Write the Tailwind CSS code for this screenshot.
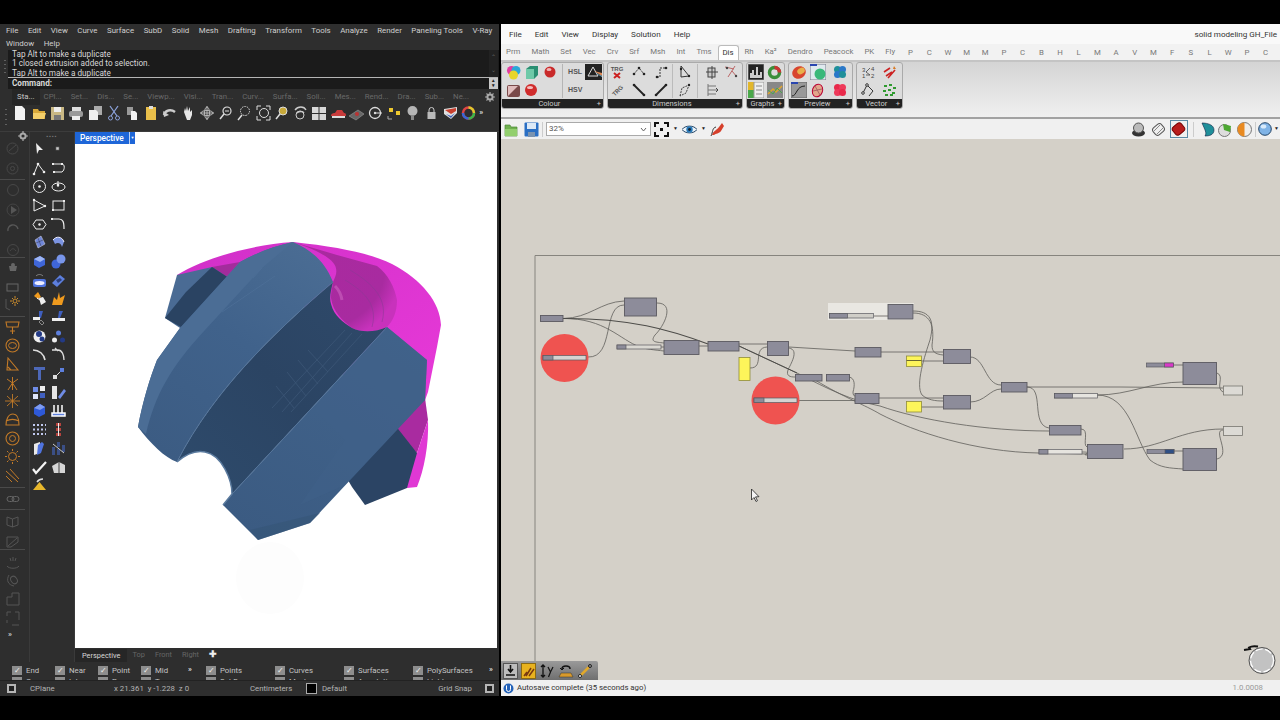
<!DOCTYPE html>
<html lang="en">
<head>
<meta charset="UTF-8">
<title>Rhino and Grasshopper</title>
<script src="https://cdn.jsdelivr.net/npm/@tailwindcss/browser@4"></script>
</head>
<body class="bg-black h-[720px] w-[1280px] overflow-hidden font-['Roboto',sans-serif]">
<div class="flex h-[672px] mt-[24px] gap-[2px]">

  <!-- Rhino side -->
  <div class="w-[499px] h-full flex flex-col bg-[#2e2e2e] text-[#cfcfcf]">
    <div class="h-[26px] pl-[6px] text-[7.9px] leading-[13px] shrink-0 whitespace-nowrap">
      <div class="flex gap-[9.5px]"><span>File</span><span>Edit</span><span>View</span><span>Curve</span><span>Surface</span><span>SubD</span><span>Solid</span><span>Mesh</span><span>Drafting</span><span>Transform</span><span>Tools</span><span>Analyze</span><span>Render</span><span>Paneling Tools</span><span>V-Ray</span></div>
      <div class="flex gap-[9.5px]"><span>Window</span><span>Help</span></div>
    </div>
    <div class="h-[39px] shrink-0 flex">
      <svg class="w-[8px] h-[28px]" viewBox="0 0 8 28"><path d="M5 10v1M5 14v1M5 18v1M5 22v1" stroke="#777" stroke-width="1.400"/></svg>
      <div class="flex-1 bg-[#1b1b1b] flex flex-col text-[8.2px] leading-[9.3px] text-[#d8d8d8] pr-[1px]">
        <div class="h-[28px] pl-[4px] border-b border-[#b5b5b5] flex justify-between overflow-hidden">
          <div><div>Tap Alt to make a duplicate</div><div>1 closed extrusion added to selection.</div><div>Tap Alt to make a duplicate</div></div>
          <div class="w-[9px] bg-[#222] text-[#666] text-[6px] text-center leading-[13px]">⌃<br>⌄</div>
        </div>
        <div class="flex-1 pl-[4px] font-bold leading-[11px] flex justify-between">Command:<span class="w-[9px] bg-[#c8c8c8] text-[#222] text-[5px] leading-[5px] text-center">▴<br>▾</span></div>
      </div>
    </div>
    <div class="h-[16px] shrink-0 pl-[12px] pr-[2px] flex items-center gap-[9px] text-[7.8px] text-[#696969] whitespace-nowrap">
      <span class="bg-[#262626] text-[#c8c8c8] px-[5px] -mr-[5px] leading-[16px]">Sta...</span><span>CPl...</span><span>Set...</span><span>Dis...</span><span>Se...</span><span>Viewp...</span><span>Visi...</span><span>Tran...</span><span>Curv...</span><span>Surfa...</span><span>Soli...</span><span>Mes...</span><span>Rend...</span><span>Dra...</span><span>Sub...</span><span>Ne...</span>
      <svg class="w-[10px] h-[10px] ml-auto mr-[2px]" viewBox="0 0 10 10"><circle cx="5" cy="5" r="2.600" fill="none" stroke="#aaa" stroke-width="2"/><path d="M5 0v2M5 8v2M0 5h2M8 5h2M1.500 1.500l1.300 1.300M7.200 7.200l1.300 1.300M1.500 8.500l1.300-1.300M7.200 2.800l1.300-1.300" stroke="#aaa" stroke-width="1.200"/></svg>
    </div>
    <div class="h-[27px] shrink-0 flex items-start border-b border-[#3c3c3c]">
      <svg class="w-[11px] h-[24px]" viewBox="0 0 11 24"><path d="M6 4v1M6 9v1M6 14v1M6 19v1" stroke="#777" stroke-width="1.400"/></svg>
      <div class="w-[18.7px] flex justify-center"><svg class="w-[14px] h-[16px]" viewBox="0 0 14 16"><path d="M2 1h7l3 3v11H2z" fill="#f2f2f2"/></svg></div>
      <div class="w-[18.7px] flex justify-center"><svg class="w-[15px] h-[16px]" viewBox="0 0 15 16"><path d="M1 4h5l1 2h6v8H1z" fill="#d9a93a"/><path d="M1 8h13l-2 6H1z" fill="#f4cf6a"/></svg></div>
      <div class="w-[18.7px] flex justify-center"><svg class="w-[15px] h-[16px]" viewBox="0 0 15 16"><rect x="1" y="2" width="13" height="13" fill="#c9b884"/><rect x="4" y="2" width="7" height="5" fill="#eee"/><rect x="4" y="10" width="7" height="5" fill="#777"/></svg></div>
      <div class="w-[18.7px] flex justify-center"><svg class="w-[16px] h-[16px]" viewBox="0 0 16 16"><rect x="4" y="2" width="9" height="5" fill="#ddd"/><rect x="1" y="6" width="14" height="6" rx="2" fill="#999"/><rect x="4" y="11" width="8" height="4" fill="#eee"/></svg></div>
      <div class="w-[18.7px] flex justify-center"><svg class="w-[15px] h-[16px]" viewBox="0 0 15 16"><rect x="6" y="1" width="8" height="9" fill="#aaa"/><path d="M1 5h7l2 2v8H1z" fill="#eee"/></svg></div>
      <div class="w-[18.7px] flex justify-center"><svg class="w-[14px] h-[16px]" viewBox="0 0 14 16"><path d="M3 1l7 10M11 1L4 11" stroke="#8aa0d8" stroke-width="1.300"/><circle cx="3.500" cy="13" r="2" fill="none" stroke="#8aa0d8"/><circle cx="10.500" cy="13" r="2" fill="none" stroke="#8aa0d8"/></svg></div>
      <div class="w-[18.7px] flex justify-center"><svg class="w-[14px] h-[16px]" viewBox="0 0 14 16"><rect x="2" y="2" width="6" height="8" fill="#999"/><path d="M6 6h4l2 2v7H6z" fill="#f2f2f2"/></svg></div>
      <div class="w-[18.7px] flex justify-center"><svg class="w-[14px] h-[16px]" viewBox="0 0 14 16"><rect x="2" y="2" width="10" height="13" fill="#e9bf4a"/><rect x="5" y="1" width="4" height="3" fill="#ddd"/></svg></div>
      <div class="w-[18.7px] flex justify-center"><svg class="w-[16px] h-[16px]" viewBox="0 0 16 16"><path d="M2 10C3 5 9 4 13 7" fill="none" stroke="#ccc" stroke-width="2.500"/><path d="M1 6l1 6 5-2z" fill="#ccc"/></svg></div>
      <div class="w-[18.7px] flex justify-center"><svg class="w-[15px] h-[16px]" viewBox="0 0 15 16"><path d="M3 7l1-4 1 3 1-5 1 5 2-4v5l2-2v5l-2 5H6z" fill="#e6e6e6"/></svg></div>
      <div class="w-[18.7px] flex justify-center"><svg class="w-[16px] h-[16px]" viewBox="0 0 16 16"><path d="M8 1v14M1 8h14" stroke="#b9b9b9"/><ellipse cx="8" cy="8" rx="6" ry="2.500" fill="none" stroke="#b9b9b9"/><ellipse cx="8" cy="8" rx="2.500" ry="6" fill="none" stroke="#b9b9b9"/></svg></div>
      <div class="w-[18.7px] flex justify-center"><svg class="w-[14px] h-[16px]" viewBox="0 0 14 16"><circle cx="8" cy="6" r="4" fill="none" stroke="#ddd" stroke-width="1.200"/><path d="M5 9l-4 5" stroke="#ddd" stroke-width="1.500"/><path d="M6 6h4" stroke="#ddd"/></svg></div>
      <div class="w-[18.7px] flex justify-center"><svg class="w-[15px] h-[16px]" viewBox="0 0 15 16"><circle cx="8" cy="6" r="4.500" fill="none" stroke="#ddd" stroke-dasharray="1.500 1"/><path d="M5 10l-4 5" stroke="#ddd" stroke-width="1.500"/></svg></div>
      <div class="w-[18.7px] flex justify-center"><svg class="w-[15px] h-[16px]" viewBox="0 0 15 16"><circle cx="8" cy="8" r="4.500" fill="none" stroke="#ddd"/><path d="M1 5V1h4M14 5V1h-4M1 11v4h4M14 11v4h-4" fill="none" stroke="#ddd"/></svg></div>
      <div class="w-[18.7px] flex justify-center"><svg class="w-[14px] h-[16px]" viewBox="0 0 14 16"><circle cx="8" cy="6" r="4" fill="#c8a93a" stroke="#ddd"/><path d="M5 9l-4 5" stroke="#ddd" stroke-width="1.500"/></svg></div>
      <div class="w-[18.7px] flex justify-center"><svg class="w-[15px] h-[16px]" viewBox="0 0 15 16"><path d="M2 5c3-4 9-4 11 0M4 8c2-2 6-2 7 0" fill="none" stroke="#ccc" stroke-width="1.300"/><circle cx="7" cy="10" r="4" fill="none" stroke="#ccc"/></svg></div>
      <div class="w-[18.7px] flex justify-center"><svg class="w-[16px] h-[16px]" viewBox="0 0 16 16"><rect x="1" y="2" width="6.500" height="6" fill="#d8d8d8"/><rect x="8.500" y="2" width="6.500" height="6" fill="#d8d8d8"/><rect x="1" y="9" width="6.500" height="6" fill="#d8d8d8"/><rect x="8.500" y="9" width="6.500" height="6" fill="#d8d8d8"/></svg></div>
      <div class="w-[18.7px] flex justify-center"><svg class="w-[17px] h-[16px]" viewBox="0 0 17 16"><path d="M1 11c0-3 3-3 4-3l2-3h5l2 3c2 0 2 1 2 3z" fill="#c93b3b"/><rect x="2" y="11" width="13" height="2" fill="#ddd"/></svg></div>
      <div class="w-[18.7px] flex justify-center"><svg class="w-[17px] h-[16px]" viewBox="0 0 17 16"><path d="M1 11l9-6 6 4-8 6z" fill="#666" stroke="#999" stroke-width=".6"/><circle cx="9" cy="9" r="2" fill="#b33"/></svg></div>
      <div class="w-[18.7px] flex justify-center"><svg class="w-[15px] h-[16px]" viewBox="0 0 15 16"><circle cx="7" cy="8" r="5.500" fill="none" stroke="#ddd" stroke-width="1.300"/><circle cx="7" cy="8" r="1.200" fill="#ddd"/><path d="M7 8h7" stroke="#ddd"/></svg></div>
      <div class="w-[18.7px] flex justify-center"><svg class="w-[15px] h-[16px]" viewBox="0 0 15 16"><rect x="2" y="3" width="4" height="4" fill="#eec92f"/><rect x="9" y="6" width="4" height="4" fill="#eec92f"/><path d="M1 14v-3M5 14H1" stroke="#aaa"/></svg></div>
      <div class="w-[18.7px] flex justify-center"><svg class="w-[13px] h-[16px]" viewBox="0 0 13 16"><circle cx="6.500" cy="6" r="5" fill="#b5b5b5"/><rect x="5" y="10" width="3" height="5" fill="#888"/></svg></div>
      <div class="w-[18.7px] flex justify-center"><svg class="w-[13px] h-[16px]" viewBox="0 0 13 16"><path d="M4 7V5a2.500 2.500 0 015 0v2" fill="none" stroke="#ccc"/><rect x="2.500" y="7" width="8" height="7" fill="#bbb"/></svg></div>
      <div class="w-[18.7px] flex justify-center"><svg class="w-[15px] h-[16px]" viewBox="0 0 15 16"><path d="M1 4l13-2v6l-6 6-7-5z" fill="#dfdfdf"/><path d="M2 5l11-2v3L8 9z" fill="#c9402f"/><path d="M3 9l5 2 4-3-4 5z" fill="#3b5db5"/></svg></div>
      <div class="w-[18.7px] flex justify-center"><svg class="w-[15px] h-[16px]" viewBox="0 0 15 16"><circle cx="7.500" cy="8" r="5.500" fill="none" stroke="#d44" stroke-width="2.500"/><path d="M7.500 2.500a5.500 5.500 0 015.500 5.500" fill="none" stroke="#e0c92c" stroke-width="2.500"/><path d="M13 8a5.500 5.500 0 01-5.500 5.500" fill="none" stroke="#3bb54a" stroke-width="2.500"/><path d="M7.500 13.500A5.500 5.500 0 012 8" fill="none" stroke="#3866d6" stroke-width="2.500"/></svg></div>
      <span class="text-[8px] leading-[14px] font-bold text-[#ddd] pl-[1px]">»</span>
    </div>

    <div class="flex h-[530px] shrink-0">
      <!-- side toolbars -->
      <div class="w-[29px] shrink-0 flex flex-col pr-[4px] text-[#555]">
        <div class="h-[9px] shrink-0 flex justify-end -mr-[3px]"><svg class="w-[10px] h-[10px] shrink-0 mt-[-1px]" viewBox="0 0 10 10"><circle cx="5" cy="5" r="2.600" fill="none" stroke="#aaa" stroke-width="2"/><path d="M5 0v2M5 8v2M0 5h2M8 5h2" stroke="#aaa" stroke-width="1.200"/></svg></div>
        <div class="h-[39px] shrink-0 flex flex-col items-center gap-[7px] pt-[1px] border-b border-[#4a4a4a]">
          <svg class="w-[13px] h-[13px] shrink-0" viewBox="0 0 13 13"><circle cx="6.500" cy="6.500" r="5.500" fill="none" stroke="#484848"/><path d="M3 9l7-6" stroke="#484848"/></svg>
          <svg class="w-[13px] h-[13px] shrink-0" viewBox="0 0 13 13"><circle cx="6.500" cy="6.500" r="5.500" fill="none" stroke="#484848"/><circle cx="6.500" cy="6.500" r="2" fill="none" stroke="#484848"/></svg>
        </div>
        <div class="h-[78px] shrink-0 flex flex-col items-center gap-[6px] pt-[3px] border-b border-[#4a4a4a]">
          <svg class="w-[14px] h-[14px] shrink-0" viewBox="0 0 14 14"><circle cx="7" cy="7" r="5.500" fill="none" stroke="#484848"/></svg>
          <svg class="w-[14px] h-[14px] shrink-0" viewBox="0 0 14 14"><path d="M5 3l6 4-6 4z" fill="#555"/><circle cx="7" cy="7" r="6" fill="none" stroke="#444"/></svg>
          <svg class="w-[14px] h-[14px] shrink-0" viewBox="0 0 14 14"><path d="M12 6A5 5 0 102 8" fill="none" stroke="#585858" stroke-width="1.400"/></svg>
          <svg class="w-[14px] h-[14px] shrink-0" viewBox="0 0 14 14"><circle cx="7" cy="7" r="5.500" fill="none" stroke="#484848"/><path d="M4 8c2-3 4-3 6 0" fill="none" stroke="#484848"/></svg>
        </div>
        <div class="h-[59px] shrink-0 flex flex-col items-center pt-[3px] border-b border-[#4a4a4a]">
          <svg class="w-[14px] h-[13px] shrink-0" viewBox="0 0 14 13"><path d="M3 5h8l-1 5H4z" fill="#666"/><circle cx="7" cy="4" r="2" fill="#666"/></svg>
          <svg class="w-[14px] h-[11px] shrink-0 mt-[8px]" viewBox="0 0 14 11"><rect x="1" y="2" width="11" height="7" fill="none" stroke="#666"/></svg>
          <svg class="w-[17px] h-[15px] shrink-0 mt-[3px]" viewBox="0 0 17 15"><path d="M2 3v9l4 2" fill="none" stroke="#555"/><circle cx="11" cy="5" r="2" fill="none" stroke="#c98b2c"/><path d="M11 0v2M11 8v2M6 5h2M14 5h2M8 2l1 1M14 2l-1 1M8 8l1-1M14 8l-1-1" stroke="#c98b2c"/></svg>
        </div>
        <div class="h-[171px] shrink-0 flex flex-col items-center gap-[3.700px] pt-[2.500px] border-b border-[#4a4a4a]">
          <svg class="w-[15px] h-[15px] shrink-0" viewBox="0 0 15 15"><path d="M1 2h13l-1 5H2zM7.500 7v7M5 11h5" fill="none" stroke="#c27a28" stroke-width="1.100"/></svg>
          <svg class="w-[15px] h-[15px] shrink-0" viewBox="0 0 15 15"><circle cx="7.500" cy="7.500" r="6.500" fill="none" stroke="#c27a28" stroke-width="1.100"/><ellipse cx="7.500" cy="7.500" rx="4" ry="3" fill="none" stroke="#c27a28"/></svg>
          <svg class="w-[15px] h-[15px] shrink-0" viewBox="0 0 15 15"><path d="M3 1l10 12H2zM3 10l3 3" fill="none" stroke="#c27a28" stroke-width="1.100"/></svg>
          <svg class="w-[15px] h-[15px] shrink-0" viewBox="0 0 15 15"><path d="M7.500 1v13M2 3l5.500 4L13 3M3 14l4.500-7 4.500 7" fill="none" stroke="#c27a28"/></svg>
          <svg class="w-[15px] h-[14px] shrink-0" viewBox="0 0 15 14"><path d="M7.500 0v14M0 7h15M2 2l11 10M13 2L2 12" stroke="#c27a28" stroke-width=".9"/></svg>
          <svg class="w-[15px] h-[15px] shrink-0" viewBox="0 0 15 15"><path d="M1 13c0-5 2-11 7-11s6 5 6 11zM1 9c4-2 9-2 13 0" fill="none" stroke="#c27a28" stroke-width="1.100"/></svg>
          <svg class="w-[15px] h-[15px] shrink-0" viewBox="0 0 15 15"><circle cx="7.500" cy="7.500" r="6.500" fill="none" stroke="#c27a28" stroke-width="1.100"/><circle cx="7.500" cy="7.500" r="3" fill="none" stroke="#c27a28"/></svg>
          <svg class="w-[15px] h-[15px] shrink-0" viewBox="0 0 15 15"><circle cx="7.500" cy="7.500" r="4" fill="none" stroke="#c27a28"/><path d="M7.500 0v2M7.500 13v2M0 7.500h2M13 7.500h2M2 2l1.500 1.500M13 2l-1.500 1.500M2 13l1.500-1.500M13 13l-1.500-1.500" stroke="#c27a28"/></svg>
          <svg class="w-[15px] h-[15px] shrink-0" viewBox="0 0 15 15"><path d="M1 3l12 11M5 1l9 10M1 8l6 6" stroke="#c27a28"/></svg>
        </div>
        <div class="h-[22px] shrink-0 flex items-center justify-center border-b border-[#4a4a4a]"><svg class="w-[14px] h-[8px] shrink-0" viewBox="0 0 14 8"><rect x="1" y="1.500" width="7" height="5" rx="2.500" fill="none" stroke="#666"/><rect x="6" y="1.500" width="7" height="5" rx="2.500" fill="none" stroke="#666"/></svg></div>
        <div class="h-[40px] shrink-0 flex flex-col items-center gap-[7px] pt-[4.500px] border-b border-[#4a4a4a]">
          <svg class="w-[13px] h-[13px] shrink-0" viewBox="0 0 13 13"><path d="M1 2l5.500 2L12 2v8l-5.500 2L1 10zM6.500 4v8" fill="none" stroke="#555"/></svg>
          <svg class="w-[13px] h-[13px] shrink-0" viewBox="0 0 13 13"><path d="M1 2h11v5l-7 5H1zM2 11l9-8" fill="none" stroke="#555"/></svg>
        </div>
        <div class="flex flex-col items-center pt-[6px]">
          <svg class="w-[14px] h-[14px] shrink-0" viewBox="0 0 14 14"><path d="M1 10c2 3 10 3 12 0M7 1v4M4 2l1 3M10 2L9 5" fill="none" stroke="#555"/></svg>
          <svg class="w-[14px] h-[14px] shrink-0 mt-[3px]" viewBox="0 0 14 14"><path d="M3 2c-3 5-1 10 5 11" fill="none" stroke="#555"/><ellipse cx="8" cy="7" rx="3" ry="4" transform="rotate(-35 8 7)" fill="none" stroke="#555"/></svg>
          <svg class="w-[14px] h-[14px] shrink-0 mt-[5px]" viewBox="0 0 14 14"><path d="M1 5h5V1h7v12H1z" fill="none" stroke="#555"/></svg>
          <svg class="w-[14px] h-[15px] shrink-0 mt-[4.500px]" viewBox="0 0 14 15"><path d="M1 5V1h4M9 1h4v8M1 9v3M6 14h7" fill="none" stroke="#555"/></svg>
          <span class="text-[8px] leading-[9px] font-bold text-[#c8c8c8] -ml-[5px] mt-[3px]">»</span>
        </div>
      </div>
      <div class="w-[46px] shrink-0 border-x border-[#3a3a3a]">
        <div class="text-center text-[#777] text-[5px] tracking-[1px] leading-[8px]">▪▪▪▪</div>
        <div class="grid grid-cols-[18.7px_18.7px] auto-rows-[18.7px] justify-items-center items-center">
          <svg class="w-[14px] h-[14px]" viewBox="0 0 14 14"><path d="M4 1l7 7H7l-2 4z" fill="#eee"/></svg>
          <svg class="w-[14px] h-[14px]" viewBox="0 0 14 14"><rect x="5" y="5" width="3" height="3" fill="#ccc" stroke="#666" stroke-width=".6"/></svg>
          <svg class="w-[15px] h-[15px]" viewBox="0 0 15 15"><path d="M2 13L6 3l6 8" fill="none" stroke="#eee"/><circle cx="2" cy="13" r="1.300" fill="#eee"/><circle cx="6" cy="3" r="1.300" fill="#eee"/><circle cx="12" cy="11" r="1.300" fill="#eee"/></svg>
          <svg class="w-[15px] h-[15px]" viewBox="0 0 15 15"><path d="M2 3h9c3 0 3 6 0 8H4" fill="none" stroke="#eee"/><rect x="1" y="2" width="2" height="2" fill="#eee"/><rect x="10" y="2" width="2" height="2" fill="#eee"/><rect x="2" y="10" width="2" height="2" fill="#eee"/></svg>
          <svg class="w-[15px] h-[15px]" viewBox="0 0 15 15"><circle cx="7.500" cy="7.500" r="6" fill="none" stroke="#eee"/><circle cx="7.500" cy="7.500" r="1.300" fill="#eee"/></svg>
          <svg class="w-[15px] h-[15px]" viewBox="0 0 15 15"><ellipse cx="7.500" cy="8" rx="6.500" ry="4" fill="none" stroke="#eee"/><circle cx="7" cy="6" r="1.300" fill="#eee"/><path d="M7 2v6" stroke="#eee"/></svg>
          <svg class="w-[15px] h-[15px]" viewBox="0 0 15 15"><path d="M2 2l11 6-11 5z" fill="none" stroke="#eee"/><circle cx="2" cy="2" r="1.200" fill="#eee"/><circle cx="13" cy="8" r="1.200" fill="#eee"/></svg>
          <svg class="w-[15px] h-[15px]" viewBox="0 0 15 15"><rect x="2" y="3" width="11" height="9" fill="none" stroke="#eee"/><rect x="1" y="11" width="2" height="2" fill="#eee"/><rect x="12" y="2" width="2" height="2" fill="#eee"/></svg>
          <svg class="w-[15px] h-[15px]" viewBox="0 0 15 15"><path d="M4 3h7l3 4.500-3 4.500H4L1 7.500z" fill="none" stroke="#eee"/><circle cx="7.500" cy="7.500" r="1.200" fill="#eee"/></svg>
          <svg class="w-[15px] h-[15px]" viewBox="0 0 15 15"><path d="M1 2h7c4 0 5 3 5 10" fill="none" stroke="#eee" stroke-width="1.200"/><rect x="0" y="1" width="2" height="2" fill="#eee"/></svg>
          <svg class="w-[15px] h-[15px]" viewBox="0 0 15 15"><path d="M3 5l6-4 4 8-7 4z" fill="#6f86d8" stroke="#dde" stroke-width=".5"/><path d="M6 3l3 8M4 8l7-3" stroke="#334" stroke-width=".5"/></svg>
          <svg class="w-[15px] h-[15px]" viewBox="0 0 15 15"><path d="M2 5c3-4 9-4 11 2l-2 5C10 8 7 7 4 9z" fill="#7b93e0"/><path d="M2 5c3-4 9-4 11 2" fill="none" stroke="#eef"/></svg>
          <svg class="w-[15px] h-[15px]" viewBox="0 0 15 15"><path d="M2 5l6-3 5 3v6l-6 3-5-3z" fill="#3f66d8"/><path d="M2 5l6-3 5 3-5 3z" fill="#9db5f5"/></svg>
          <svg class="w-[15px] h-[15px]" viewBox="0 0 15 15"><circle cx="5" cy="10" r="4.500" fill="#3f66d8"/><circle cx="10" cy="5" r="4.500" fill="#7895ea"/></svg>
          <svg class="w-[15px] h-[15px]" viewBox="0 0 15 15"><rect x="1" y="6" width="13" height="8" rx="2" fill="#4f73de"/><ellipse cx="7.500" cy="10" rx="5" ry="2" fill="#eef"/><path d="M4 3c2-2 5-2 7 0" fill="none" stroke="#888"/></svg>
          <svg class="w-[15px] h-[15px]" viewBox="0 0 15 15"><path d="M1 10l8-8 5 4-8 8z" fill="#5d7fdd"/><path d="M5 7l4-2 2 2-4 3z" fill="#2c3f7a"/></svg>
          <svg class="w-[15px] h-[15px]" viewBox="0 0 15 15"><path d="M2 5l4-4 3 5-3 2z" fill="#ef9a1e"/><path d="M7 7l4-1 3 5-5 3z" fill="#eee"/><path d="M5 7l3 2" stroke="#fff"/></svg>
          <svg class="w-[15px] h-[15px]" viewBox="0 0 15 15"><path d="M1 14l2-8 3 3 2-8 1 6 5-3-3 10z" fill="#ef9a1e"/></svg>
          <svg class="w-[15px] h-[15px]" viewBox="0 0 15 15"><path d="M7 1h4l-2 7H7z" fill="#3f5fbf"/><path d="M1 7h7v3H1z" fill="#eee"/><path d="M9 10l3 3-2 2-3-3z" fill="none" stroke="#888"/></svg>
          <svg class="w-[15px] h-[15px]" viewBox="0 0 15 15"><path d="M8 1h4L9 8H7z" fill="#3f5fbf"/><path d="M1 8h13v3H1z" fill="#eee"/></svg>
          <svg class="w-[15px] h-[15px]" viewBox="0 0 15 15"><circle cx="7.500" cy="7.500" r="6" fill="#eee"/><circle cx="7" cy="5" r="3" fill="#233a86"/><circle cx="10" cy="10" r="2.500" fill="#233a86"/></svg>
          <svg class="w-[15px] h-[15px]" viewBox="0 0 15 15"><circle cx="7.500" cy="4" r="2.500" fill="#5d7fdd"/><circle cx="3.500" cy="11" r="2.500" fill="#eee"/><circle cx="11.500" cy="11" r="2.500" fill="#233a86"/></svg>
          <svg class="w-[15px] h-[15px]" viewBox="0 0 15 15"><path d="M1 3c6 0 11 4 12 10" fill="none" stroke="#ddd" stroke-width="1.600"/></svg>
          <svg class="w-[15px] h-[15px]" viewBox="0 0 15 15"><path d="M1 3h6c4 0 6 5 6 10M4 1l3 3" fill="none" stroke="#ddd" stroke-width="1.300"/></svg>
          <svg class="w-[15px] h-[15px]" viewBox="0 0 15 15"><path d="M2 1h11v3H9v10H6V4H2z" fill="#4d68b8"/></svg>
          <svg class="w-[15px] h-[15px]" viewBox="0 0 15 15"><rect x="9" y="2" width="4" height="4" fill="#5d7fdd"/><rect x="2" y="9" width="4" height="4" fill="#ddd"/><path d="M6 9l3-3" stroke="#ddd"/></svg>
          <svg class="w-[15px] h-[15px]" viewBox="0 0 15 15"><rect x="1" y="2" width="5" height="5" fill="#6f8ce6"/><rect x="8" y="1" width="5" height="5" fill="#eee"/><rect x="8" y="8" width="5" height="5" fill="#4160c0"/><rect x="1" y="9" width="5" height="5" fill="#dfe5f8"/></svg>
          <svg class="w-[15px] h-[15px]" viewBox="0 0 15 15"><rect x="1" y="1" width="5" height="13" fill="#e6e6e6"/><path d="M7 12l6-8 2 2-6 8z" fill="#6f8ce6"/></svg>
          <svg class="w-[15px] h-[15px]" viewBox="0 0 15 15"><path d="M2 5l6-4 5 3v7l-6 3-5-3z" fill="#2e59d8"/><path d="M2 5l6-4 5 3-5 3z" fill="#7e9bf0"/></svg>
          <svg class="w-[15px] h-[15px]" viewBox="0 0 15 15"><path d="M1 10h13v3H1zM3 2v8M7 2v8M11 2v8" stroke="#fff" stroke-width="1.500" fill="#5d7fdd"/></svg>
          <svg class="w-[15px] h-[15px]" viewBox="0 0 15 15"><path d="M1 3h13M1 7.500h13M1 12h13" stroke="#c0c8ee" stroke-width="2" stroke-dasharray="2 2"/></svg>
          <svg class="w-[15px] h-[15px]" viewBox="0 0 15 15"><path d="M5 1h5v3H5zM5 6h5v3H5zM5 11h5v3H5z" fill="#b4433e"/><path d="M7.500 1v13" stroke="#eee"/></svg>
          <svg class="w-[15px] h-[15px]" viewBox="0 0 15 15"><path d="M2 3l6-2v11l-6 2z" fill="#e8e8e8"/><path d="M6 4l4-3 2 2-3 9-4 2z" fill="#4f73de"/></svg>
          <svg class="w-[15px] h-[15px]" viewBox="0 0 15 15"><path d="M1 6h3v8H1zM6 1h3v5H6zM6 8h3v6H6zM11 4h3v7h-3z" fill="#3b4f85"/><path d="M2 3l11 9" stroke="#ccc"/></svg>
          <svg class="w-[15px] h-[15px]" viewBox="0 0 15 15"><path d="M1 9l3 4L14 2" fill="none" stroke="#f4f4f4" stroke-width="2.200"/></svg>
          <svg class="w-[15px] h-[15px]" viewBox="0 0 15 15"><path d="M1 6l7-4 6 3v8H3z" fill="#d6d6d6"/><path d="M8 2v11" stroke="#444"/></svg>
          <svg class="w-[15px] h-[15px]" viewBox="0 0 15 15"><path d="M7.500 4L14 12H1z" fill="#e7b72c"/><path d="M5 4c2-3 4-3 6-3" stroke="#ddd" stroke-width="1.500" fill="none"/></svg>
        </div>
      </div>

      <!-- viewport -->
      <div class="flex-1 flex flex-col pr-[2px] min-w-0">
        <div class="h-[516px] shrink-0 bg-white relative">
          <div class="absolute left-0 top-0 h-[12px] flex text-[8.3px] leading-[12px] font-medium text-white">
            <span class="bg-[#1e66d8] px-[5px] w-[54px]">Perspective</span><span class="bg-[#1e66d8] w-[6px] border-l border-white/70 text-[4px] text-center">▼</span>
          </div>
          <svg class="w-full h-full" viewBox="75 132 422 516">
            <defs>
              <linearGradient id="mag" x1="0" y1="0" x2="1" y2="1"><stop offset="0" stop-color="#d030c8"/><stop offset="1" stop-color="#ea3ada"/></linearGradient>
              <linearGradient id="upper" x1=".8" y1="0" x2=".2" y2="1"><stop offset="0" stop-color="#4a6c93"/><stop offset=".45" stop-color="#40628b"/><stop offset="1" stop-color="#3c5c83"/></linearGradient>
              <linearGradient id="lower" x1=".8" y1="0" x2=".2" y2="1"><stop offset="0" stop-color="#42648c"/><stop offset="1" stop-color="#3b5b82"/></linearGradient>
              <linearGradient id="dark" x1="1" y1="0" x2="0" y2="1"><stop offset="0" stop-color="#2f4a6b"/><stop offset=".5" stop-color="#2b4463"/><stop offset="1" stop-color="#2e4b6c"/></linearGradient>
              <radialGradient id="grooveM" cx=".2" cy=".3" r=".85"><stop offset="0" stop-color="#d060c8"/><stop offset=".18" stop-color="#a92a9f"/><stop offset=".8" stop-color="#a82ba0"/><stop offset="1" stop-color="#c832bc"/></radialGradient>
            </defs>
            <ellipse cx="270" cy="578" rx="34" ry="36" fill="#fdfdfd"/>
            <!-- magenta back shell -->
            <path d="M177 275C205 258 250 245 293 242C340 247 372 254 392 264C422 280 440 302 441 325L437 347L428 392L424 403L380 440L300 300Z" fill="url(#mag)"/>
            <path d="M392 432L425 398L428 420L417 453Z" fill="#a92ba0"/>
            <path d="M395 438L417 453L428 420C429 445 424 470 417 487L407 488Z" fill="#e038d4"/>
            <!-- left lobe -->
            <path d="M212 267L240 262L222 282Z" fill="#a32c9c"/>
            <path d="M177 275L212 267L235 282L195 335L180 328L165 318L170 300Z" fill="#4a6b94"/>
            <path d="M212 267L235 282L195 335L165 318L186 292Z" fill="#2a4362"/>
            <!-- lower right lobe -->
            <path d="M345 475L395 425L417 453L407 488L365 505L352 487Z" fill="#2b4464"/>
            <!-- magenta groove -->
            <path d="M293 242L337 255L377 266C388 274 395 288 397 300C397 312 393 321 387 327C376 332 362 333 352 328C342 320 333 312 331 298C331 290 333 286 333 282C340 268 340 258 293 242Z" fill="url(#grooveM)"/>
            <!-- dark groove -->
            <path d="M333 282C331 290 329 298 331 304C334 316 343 322 352 328C362 333 376 332 387 327L232 494C232 480 222 455 205 452C195 450 185 455 177 462C213 390 280 327 333 282Z" fill="url(#dark)"/>
            <!-- upper band -->
            <path d="M293 242C312 250 325 262 333 282C280 327 213 390 177 462C165 458 150 443 138 427C143 400 150 378 157 360L180 328L240 262C258 252 275 246 293 242Z" fill="url(#upper)"/>
            <path d="M293 242C275 246 258 252 240 262L180 328L157 360C150 378 143 400 138 427L146 434C155 395 170 368 205 330L262 268Z" fill="#4b6d95"/>
            <path d="M253 278L262 268M222 312L275 276" stroke="#4f7199" stroke-width="1" opacity=".7"/>
            <!-- lower band -->
            <path d="M387 327L427 360L425 400L310 523L258 540L223 505L232 494Z" fill="url(#lower)"/>
            <path d="M315 408L387 327L427 360L425 400L345 485L300 505L345 440Z" fill="#3f6189" opacity=".55"/>
            <path d="M258 540L310 523L320 513L250 530Z" fill="#355577" opacity=".6"/>
            <!-- soft edge highlights -->
            <path d="M333 282C280 327 213 390 177 462" fill="none" stroke="#54749a" stroke-width="1"/>
            <path d="M387 327L232 494" stroke="#54749a" stroke-width="1"/>
            <path d="M177 462C185 455 195 450 205 452C222 455 232 480 232 494L223 505" fill="none" stroke="#5a7a9e" stroke-width="1.500"/>
            <!-- reflection lines in the groove -->
            <g stroke="#3d5878" stroke-width=".8" fill="none" opacity=".9">
              <path d="M345 330L272 408M352 333L282 412M362 334L291 412M308 350L328 372M298 360L318 384M287 372L306 396M276 386L294 408"/>
            </g>
            <g stroke="#8a3a95" stroke-width=".7" fill="none" opacity=".8">
              <path d="M350 270C375 285 388 300 382 322M345 280C365 292 378 305 372 327"/>
            </g>
            <path d="M335 286C339 290 341 294 342 300" stroke="#dd80d0" stroke-width="3" fill="none" opacity=".4"/>
          </svg>
        </div>
        <div class="h-[14px] shrink-0 flex items-center text-[7.4px] text-[#666]">
          <span class="px-[7px] text-[#d8d8d8] bg-[#262626] leading-[13px] mr-[5px]">Perspective</span><span class="mr-[10px]">Top</span><span class="mr-[10px]">Front</span><span class="mr-[10px]">Right</span><span class="text-[#eee] font-bold text-[9px]">✚</span>
        </div>
      </div>
    </div>

    <!-- osnap + status -->
    <div class="h-[18px] shrink-0 overflow-hidden flex text-[7.8px] text-[#c4c4c4] leading-[10px] pt-[3px] whitespace-nowrap">
      <span class="w-[12px] shrink-0"></span>
      <div class="grid grid-cols-[repeat(4,43px)] auto-rows-[11px] shrink-0">
        <div class="flex items-center gap-[4px]"><span class="w-[10px] h-[9px] bg-[#8d8d8d] text-[#eee] text-[8px] leading-[9px] text-center">✓</span>End</div>
        <div class="flex items-center gap-[4px]"><span class="w-[10px] h-[9px] bg-[#8d8d8d] text-[#eee] text-[8px] leading-[9px] text-center">✓</span>Near</div>
        <div class="flex items-center gap-[4px]"><span class="w-[10px] h-[9px] bg-[#8d8d8d] text-[#eee] text-[8px] leading-[9px] text-center">✓</span>Point</div>
        <div class="flex items-center gap-[4px]"><span class="w-[10px] h-[9px] bg-[#8d8d8d] text-[#eee] text-[8px] leading-[9px] text-center">✓</span>Mid</div>
        <div class="flex items-center gap-[4px]"><span class="w-[10px] h-[9px] bg-[#8d8d8d]"></span>Cen</div>
        <div class="flex items-center gap-[4px]"><span class="w-[10px] h-[9px] bg-[#8d8d8d]"></span>Int</div>
        <div class="flex items-center gap-[4px]"><span class="w-[10px] h-[9px] bg-[#8d8d8d]"></span>Perp</div>
        <div class="flex items-center gap-[4px]"><span class="w-[10px] h-[9px] bg-[#8d8d8d]"></span>Tan</div>
      </div>
      <span class="w-[22px] shrink-0 pl-[4px] font-bold text-[#ddd] leading-[7px]">»</span>
      <div class="grid grid-cols-[repeat(4,69px)] auto-rows-[11px] shrink-0">
        <div class="flex items-center gap-[4px]"><span class="w-[10px] h-[9px] bg-[#8d8d8d] text-[#eee] text-[8px] leading-[9px] text-center">✓</span>Points</div>
        <div class="flex items-center gap-[4px]"><span class="w-[10px] h-[9px] bg-[#8d8d8d] text-[#eee] text-[8px] leading-[9px] text-center">✓</span>Curves</div>
        <div class="flex items-center gap-[4px]"><span class="w-[10px] h-[9px] bg-[#8d8d8d] text-[#eee] text-[8px] leading-[9px] text-center">✓</span>Surfaces</div>
        <div class="flex items-center gap-[4px]"><span class="w-[10px] h-[9px] bg-[#8d8d8d] text-[#eee] text-[8px] leading-[9px] text-center">✓</span>PolySurfaces</div>
        <div class="flex items-center gap-[4px]"><span class="w-[10px] h-[9px] bg-[#8d8d8d]"></span>SubD</div>
        <div class="flex items-center gap-[4px]"><span class="w-[10px] h-[9px] bg-[#8d8d8d]"></span>Meshes</div>
        <div class="flex items-center gap-[4px]"><span class="w-[10px] h-[9px] bg-[#8d8d8d]"></span>Annotation</div>
        <div class="flex items-center gap-[4px]"><span class="w-[10px] h-[9px] bg-[#8d8d8d]"></span>Lights</div>
      </div>
      <span class="pl-[7px] font-bold text-[#ddd] leading-[7px]">»</span>
    </div>
    <div class="h-[16px] shrink-0 flex items-center text-[7.8px] text-[#b4b4b4] pl-[7px] pr-[5px] bg-[#2e2e2e] border-t border-[#222] whitespace-nowrap">
      <span class="w-[9px] h-[9px] border-2 border-[#b5b5b5] bg-[#222]"></span>
      <span class="ml-[14px] w-[84px]">CPlane</span>
      <span class="w-[136px]">x 21.361&nbsp; y -1.228&nbsp; z 0</span>
      <span class="w-[56px]">Centimeters</span>
      <span class="w-[11px] h-[11px] bg-black border border-[#aaa] mr-[5px]"></span>
      <span>Default</span>
      <span class="ml-auto mr-[13px]">Grid Snap</span>
      <span class="w-[9px] h-[9px] border-2 border-[#b5b5b5] bg-[#222]"></span>
    </div>
  </div>

  <!-- Grasshopper side -->
  <div class="flex-1 h-full flex flex-col min-w-0 bg-[#d4d0c8] text-[#333]">
    <div class="h-[20px] shrink-0 bg-[#f9f9f9] flex items-center pl-[8px] pr-[3px] gap-[13px] text-[8.1px]">
      <span>File</span><span>Edit</span><span>View</span><span>Display</span><span>Solution</span><span>Help</span>
      <span class="ml-auto">solid modeling GH_File</span>
    </div>
    <div class="h-[16px] shrink-0 bg-[#f2f2f2] flex items-end pl-[5px] text-[7.8px] leading-[14px] text-[#777] overflow-hidden">
      <div class="flex gap-[11px]">
        <span>Prm</span><span>Math</span><span>Set</span><span>Vec</span><span>Crv</span><span>Srf</span><span>Msh</span><span>Int</span><span>Tms</span>
        <span class="bg-white text-[#333] border border-b-0 border-[#bbb] rounded-t-[3px] px-[4px] -mx-[5px]">Dis</span>
        <span>Rh</span><span>Ka²</span><span>Dendro</span><span>Peacock</span><span>PK</span><span>Fly</span>
      </div>
      <div class="flex ml-[6px] text-center">
        <span class="w-[18.7px]">P</span><span class="w-[18.7px]">C</span><span class="w-[18.7px]">W</span><span class="w-[18.7px]">M</span><span class="w-[18.7px]">M</span><span class="w-[18.7px]">P</span><span class="w-[18.7px]">C</span><span class="w-[18.7px]">B</span><span class="w-[18.7px]">H</span><span class="w-[18.7px]">L</span><span class="w-[18.7px]">M</span><span class="w-[18.7px]">A</span><span class="w-[18.7px]">V</span><span class="w-[18.7px]">M</span><span class="w-[18.7px]">F</span><span class="w-[18.7px]">S</span><span class="w-[18.7px]">L</span><span class="w-[18.7px]">W</span><span class="w-[18.7px]">P</span><span class="w-[18.7px]">C</span>
      </div>
    </div>
    <!-- ribbon -->
    <div class="h-[57px] shrink-0 bg-gradient-to-b from-[#d4d4d4] to-[#f0f0f0] border-t-2 border-[#c4c4c4] flex gap-[3px] pb-[8px]">
      <div class="w-[103px] flex flex-col rounded-[3px] overflow-hidden border border-[#aaa] bg-[#dcdcdc]">
        <div class="flex-1 flex items-center pl-[2px]">
          <div class="grid grid-cols-3 auto-rows-[18px] w-[56px] justify-items-center items-center">
            <svg class="w-[15px] h-[15px]" viewBox="0 0 15 15"><circle cx="5.500" cy="5.500" r="4.500" fill="#e23ca0"/><circle cx="10" cy="5.500" r="4.500" fill="#2aa7d8"/><circle cx="7.500" cy="10" r="4.500" fill="#e8d52a"/></svg>
            <svg class="w-[15px] h-[15px]" viewBox="0 0 15 15"><path d="M2 4l4-3h8v9l-4 4H2z" fill="#2a8f72"/><path d="M2 4h8v10H2z" fill="#6ec9a8"/></svg>
            <svg class="w-[14px] h-[14px]" viewBox="0 0 14 14"><circle cx="7" cy="7" r="5.500" fill="#c92a2a"/><ellipse cx="6" cy="4.500" rx="2.500" ry="1.500" fill="#f2b5b5"/></svg>
            <svg class="w-[15px] h-[15px]" viewBox="0 0 15 15"><rect x="1" y="2" width="13" height="12" rx="2" fill="#7a4a4a"/><path d="M2 3h10L2 13z" fill="#e0bcbc"/></svg>
            <svg class="w-[14px] h-[14px]" viewBox="0 0 14 14"><circle cx="7" cy="7" r="6" fill="#d02c2c"/><ellipse cx="6" cy="4.500" rx="3" ry="1.600" fill="#f5bcbc"/></svg>
            <span></span>
          </div>
          <div class="w-px h-[34px] bg-[#b5b5b5] mx-[3px]"></div>
          <div class="grid grid-cols-2 auto-rows-[18px] w-[38px] justify-items-center items-center text-[7px] font-bold text-[#555] font-['Liberation_Sans',sans-serif]">
            <span>HSL</span>
            <svg class="w-[17px] h-[16px]" viewBox="0 0 17 16"><rect width="17" height="16" fill="#222"/><path d="M8 3l5 9H3z" fill="none" stroke="#ddd"/><path d="M9 7l8 2v3z" fill="#d85"/><path d="M9 8l8 5v-1z" fill="#6bd"/></svg>
            <span>HSV</span><span></span>
          </div>
        </div>
        <div class="h-[9px] bg-[#222] text-[#ccc] text-[7.500px] leading-[9px] text-center flex"><span class="flex-1">Colour</span><span class="pr-[2px]">+</span></div>
      </div>
      <div class="w-[136px] flex flex-col rounded-[3px] overflow-hidden border border-[#aaa] bg-[#dcdcdc]">
        <div class="flex-1 grid grid-cols-[18px_25px_19px_4px_20px_6px_24px_14px] auto-rows-[18px] content-center justify-items-center items-center">
          <svg class="w-[14px] h-[14px]" viewBox="0 0 14 14"><text x="7" y="6" font-size="6" font-weight="700" text-anchor="middle" fill="#555" font-family="Liberation Sans">TRG</text><path d="M4 8l6 5M10 8l-6 5" stroke="#c22" stroke-width="2"/></svg>
          <svg class="w-[14px] h-[14px]" viewBox="0 0 14 14"><path d="M2 9l5-6 5 6" fill="none" stroke="#333" stroke-dasharray="2 1"/><circle cx="2" cy="9" r="1.300" fill="#222"/><circle cx="7" cy="3" r="1.300" fill="#222"/><circle cx="12" cy="9" r="1.300" fill="#222"/></svg>
          <svg class="w-[14px] h-[14px]" viewBox="0 0 14 14"><path d="M3 12h3V3h6" fill="none" stroke="#333" stroke-dasharray="2 1"/><circle cx="3" cy="12" r="1.300" fill="#222"/><circle cx="12" cy="3" r="1.300" fill="#222"/></svg>
          <span class="row-span-2 w-px h-[34px] bg-[#bbb]"></span>
          <svg class="w-[14px] h-[14px]" viewBox="0 0 14 14"><path d="M4 1v11l8-1z" fill="none" stroke="#333"/><circle cx="4" cy="4" r="1.200" fill="#222"/><circle cx="12" cy="11" r="1.200" fill="#222"/></svg>
          <span class="row-span-2 w-px h-[34px] bg-[#bbb]"></span>
          <svg class="w-[14px] h-[14px]" viewBox="0 0 14 14"><rect x="3" y="3" width="7" height="9" fill="#ccc" stroke="#444"/><path d="M7 1v13M1 7h12" stroke="#444"/></svg>
          <svg class="w-[14px] h-[14px]" viewBox="0 0 14 14"><path d="M1 2l9 2M4 12l7-11M8 6l5 6" stroke="#b66" stroke-width="1"/><circle cx="3" cy="3" r="1.200" fill="#444"/><circle cx="12" cy="11" r="1.200" fill="#444"/></svg>
          <svg class="w-[14px] h-[14px]" viewBox="0 0 14 14"><text x="7" y="10" font-size="6" font-weight="700" text-anchor="middle" fill="#555" transform="rotate(-45 7 7)" font-family="Liberation Sans">TRG</text></svg>
          <svg class="w-[14px] h-[14px]" viewBox="0 0 14 14"><path d="M2 2l10 10" stroke="#222" stroke-width="1.800"/><circle cx="2" cy="2" r="1.300" fill="#222"/><circle cx="12" cy="12" r="1.300" fill="#222"/></svg>
          <svg class="w-[14px] h-[14px]" viewBox="0 0 14 14"><path d="M2 12L12 2" stroke="#222" stroke-width="1.800"/><circle cx="2" cy="12" r="1.300" fill="#222"/><circle cx="12" cy="2" r="1.300" fill="#222"/></svg>
          <svg class="w-[14px] h-[14px]" viewBox="0 0 14 14"><path d="M3 13l2-8 7-3-3 8z" fill="none" stroke="#444" stroke-dasharray="2 1"/><circle cx="12" cy="2" r="1.200" fill="#222"/></svg>
          <svg class="w-[14px] h-[14px]" viewBox="0 0 14 14"><path d="M3 1v12M3 3h8M3 11h8M3 7h10" fill="none" stroke="#777"/><path d="M11 5l2 2-2 2" fill="none" stroke="#444"/></svg>
          <span></span>
        </div>
        <div class="h-[9px] bg-[#222] text-[#ccc] text-[7.500px] leading-[9px] text-center flex"><span class="flex-1">Dimensions</span><span class="pr-[2px]">+</span></div>
      </div>
      <div class="w-[39px] flex flex-col rounded-[3px] overflow-hidden border border-[#aaa] bg-[#dcdcdc]">
        <div class="flex-1 grid grid-cols-2 auto-rows-[18px] content-center justify-items-center items-center">
          <svg class="w-[16px] h-[16px]" viewBox="0 0 16 16"><rect width="16" height="16" fill="#222" stroke="#888"/><path d="M2 14V9h2V6h2v5h2V3h2v8h2V8h2v6z" fill="#ccc"/></svg>
          <svg class="w-[15px] h-[15px]" viewBox="0 0 15 15"><circle cx="7.500" cy="7.500" r="5" fill="none" stroke="#3a8f3a" stroke-width="3.500"/><path d="M7.500 2.500a5 5 0 015 5" fill="none" stroke="#c33" stroke-width="3.500"/></svg>
          <svg class="w-[16px] h-[16px]" viewBox="0 0 16 16"><rect width="6" height="16" fill="#e2b72c"/><rect y="8" width="6" height="8" fill="#4aa84a"/><rect x="6" width="10" height="16" fill="#eee" stroke="#999"/><path d="M8 4h6M8 8h6M8 12h6" stroke="#888"/></svg>
          <svg class="w-[16px] h-[16px]" viewBox="0 0 16 16"><rect width="16" height="16" fill="#888"/><path d="M1 12l5-5 3 3 6-6" fill="none" stroke="#e2a52c" stroke-width="1.500"/><path d="M1 8l5 4 4-6 5 5" fill="none" stroke="#4aa84a"/></svg>
        </div>
        <div class="h-[9px] bg-[#222] text-[#ccc] text-[7.500px] leading-[9px] text-center flex"><span class="flex-1">Graphs</span><span class="pr-[2px]">+</span></div>
      </div>
      <div class="w-[65px] flex flex-col rounded-[3px] overflow-hidden border border-[#aaa] bg-[#dcdcdc]">
        <div class="flex-1 grid grid-cols-[19px_19px_25px] auto-rows-[18px] content-center justify-items-center items-center">
          <svg class="w-[16px] h-[15px]" viewBox="0 0 16 15"><ellipse cx="8" cy="7.500" rx="7" ry="6" fill="#d8452e" transform="rotate(-30 8 7.500)"/><ellipse cx="10" cy="6" rx="4" ry="3" fill="#e8b04a" transform="rotate(-30 10 6)"/></svg>
          <svg class="w-[16px] h-[16px]" viewBox="0 0 16 16"><rect width="16" height="16" fill="#dfe9ee" stroke="#778"/><rect width="7" height="2" fill="#2a46b0"/><circle cx="10" cy="10" r="5.500" fill="#3ab87a"/></svg>
          <svg class="w-[14px] h-[14px]" viewBox="0 0 14 14"><circle cx="4.500" cy="4.500" r="3.500" fill="#1f8f9a"/><circle cx="9.500" cy="4.500" r="3.500" fill="#2a78c8"/><circle cx="4.500" cy="9.500" r="3.500" fill="#2a78c8"/><circle cx="9.500" cy="9.500" r="3.500" fill="#1f8f9a"/></svg>
          <svg class="w-[16px] h-[16px]" viewBox="0 0 16 16"><rect width="16" height="16" fill="#999" stroke="#666"/><rect width="7" height="2" fill="#2a46b0"/><path d="M1 14c5 0 4-10 13-10" fill="none" stroke="#222"/></svg>
          <svg class="w-[15px] h-[15px]" viewBox="0 0 15 15"><ellipse cx="7.500" cy="7.500" rx="5" ry="6.500" fill="#e3a68a" stroke="#b03" transform="rotate(20 7.500 7.500)"/><path d="M5 3l5 9M3 8l9-2" stroke="#a66"/></svg>
          <svg class="w-[14px] h-[14px]" viewBox="0 0 14 14"><circle cx="4.500" cy="4.500" r="3.500" fill="#e8294a"/><circle cx="9.500" cy="4.500" r="3.500" fill="#ee3a5a"/><circle cx="4.500" cy="9.500" r="3.500" fill="#ee3a5a"/><circle cx="9.500" cy="9.500" r="3.500" fill="#e8294a"/></svg>
        </div>
        <div class="h-[9px] bg-[#222] text-[#ccc] text-[7.500px] leading-[9px] text-center flex"><span class="flex-1">Preview</span><span class="pr-[2px]">+</span></div>
      </div>
      <div class="w-[47px] flex flex-col rounded-[3px] overflow-hidden border border-[#aaa] bg-[#dcdcdc]">
        <div class="flex-1 grid grid-cols-[21px_23px] auto-rows-[18px] content-center justify-items-center items-center">
          <svg class="w-[14px] h-[14px]" viewBox="0 0 14 14"><text x="1" y="7" font-size="6" fill="#444" font-family="Liberation Sans">3</text><text x="1" y="13" font-size="6" fill="#444" font-family="Liberation Sans">1</text><text x="10" y="6" font-size="6" fill="#444" font-family="Liberation Sans">4</text><text x="10" y="13" font-size="6" fill="#444" font-family="Liberation Sans">2</text><path d="M9 3L5 7l4 3M5 10h4" fill="none" stroke="#444" stroke-width=".8"/></svg>
          <svg class="w-[14px] h-[14px]" viewBox="0 0 14 14"><path d="M1 7l6-4M3 11l6-4M5 13l7-8" stroke="#c22" stroke-width="1.600"/><path d="M11 1l2 3-3 0z" fill="#d87a22"/></svg>
          <svg class="w-[14px] h-[14px]" viewBox="0 0 14 14"><path d="M2 10L6 2l6 6-4 5" fill="none" stroke="#333" stroke-width="1"/><circle cx="6" cy="2" r="1.300" fill="#eee" stroke="#333"/><circle cx="2" cy="10" r="1.300" fill="#eee" stroke="#333"/></svg>
          <svg class="w-[15px] h-[14px]" viewBox="0 0 15 14"><path d="M2 3h3M7 2h3M11 5h3M1 8h3M6 7h3M10 10h3M3 12h3M8 12h3" stroke="#2f9a2f" stroke-width="2"/></svg>
        </div>
        <div class="h-[9px] bg-[#222] text-[#ccc] text-[7.500px] leading-[9px] text-center flex"><span class="flex-1">Vector</span><span class="pr-[2px]">+</span></div>
      </div>
    </div>
    <!-- toolbar -->
    <div class="h-[22px] shrink-0 bg-[#f0f0f0] border-t-2 border-[#a2a2a2] flex items-center pl-[3px]">
      <svg class="w-[14px] h-[15px] mr-[6px]" viewBox="0 0 14 15"><path d="M1 3h5l1 2h6v9H1z" fill="#6fb04f" stroke="#4a8a35" stroke-width=".7"/><path d="M1 7h12v7H1z" fill="#92cf6e"/></svg>
      <svg class="w-[15px] h-[15px]" viewBox="0 0 15 15"><rect x="0.500" y="0.500" width="14" height="14" rx="1" fill="#2a6fc4"/><rect x="3" y="1" width="9" height="6" fill="#dbe8f6"/><rect x="4" y="10" width="7" height="5" fill="#7a93b0"/></svg>
      <span class="w-px h-[15px] bg-[#ccc] mx-[3px]"></span>
      <div class="w-[105px] h-[14px] bg-white border border-[#aaa] flex justify-between items-center pl-[2px] pr-[3px] text-[8px] text-[#555]">32%<svg class="w-[7px] h-[5px]" viewBox="0 0 7 5"><path d="M1 1l2.500 3L6 1" fill="none" stroke="#666"/></svg></div>
      <svg class="w-[15px] h-[15px] ml-[3px]" viewBox="0 0 15 15"><path d="M1 5V1h4M10 1h4v4M1 10v4h4M14 10v4h-4" fill="none" stroke="#111" stroke-width="2"/><rect x="6" y="6" width="3" height="3" fill="#111"/></svg>
      <span class="text-[5px] mx-[4px] text-[#222]">▼</span>
      <svg class="w-[15px] h-[11px]" viewBox="0 0 15 11"><path d="M0 5.500C3 1 12 1 15 5.500 12 10 3 10 0 5.500z" fill="#eaf3fa" stroke="#246" stroke-width="1"/><circle cx="7.500" cy="5.500" r="3.200" fill="#2a7cbc"/><circle cx="7.500" cy="5.500" r="1.400" fill="#123"/></svg>
      <span class="text-[5px] mx-[4px] text-[#222]">▼</span>
      <svg class="w-[15px] h-[15px]" viewBox="0 0 15 15"><path d="M2 13C3 9 7 8 9 5l3-4 2 3-3 5c-2 3-5 2-7 4z" fill="#d6402c"/><path d="M1 14c2-4 1-8 5-9" fill="none" stroke="#333"/></svg>
      <div class="ml-auto flex items-center">
        <svg class="w-[15px] h-[15px] mr-[5px]" viewBox="0 0 15 15"><ellipse cx="7.500" cy="11" rx="6.500" ry="3.500" fill="#333"/><circle cx="7.500" cy="6" r="5" fill="#bbb" stroke="#555"/></svg>
        <svg class="w-[15px] h-[15px] mr-[3.500px]" viewBox="0 0 15 15"><rect x="2" y="3" width="11" height="9" rx="3" transform="rotate(-40 7.500 7.500)" fill="#eee" stroke="#555"/><path d="M3 9l6-6M6 12l6-6" stroke="#888"/></svg>
        <div class="w-[18px] h-[18px] mr-[5px] border border-[#5a8aa5] flex items-center justify-center"><svg class="w-[15px] h-[14px]" viewBox="0 0 15 14"><rect x="2" y="2" width="11" height="10" rx="3" transform="rotate(-40 7.500 7)" fill="#b81c1c" stroke="#700"/></svg></div>
        <span class="w-px h-[15px] bg-[#ccc] mr-[6.500px]"></span>
        <svg class="w-[15px] h-[15px] mr-[3px]" viewBox="0 0 15 15"><path d="M2 1c6 0 12 2 12 7s-5 6-9 6c2-3 0-6-3-13z" fill="#1f8f9a" stroke="#124" stroke-width=".6"/></svg>
        <svg class="w-[15px] h-[15px] mr-[4px]" viewBox="0 0 15 15"><circle cx="6.500" cy="8.500" r="6" fill="#ddd" stroke="#777"/><path d="M5 2l8 2-1 6-6-2z" fill="#4ca832"/></svg>
        <svg class="w-[15px] h-[15px] mr-[3px]" viewBox="0 0 15 15"><circle cx="7.500" cy="7.500" r="7" fill="#eee" stroke="#777"/><path d="M7.500 .5a7 7 0 000 14z" fill="#e88a22"/></svg>
        <span class="w-px h-[15px] bg-[#ccc] mr-[2px]"></span>
        <svg class="w-[14px] h-[14px] mr-[2px]" viewBox="0 0 14 14"><circle cx="7" cy="7" r="6.300" fill="#7fb3e6" stroke="#246"/><ellipse cx="5.500" cy="4.500" rx="2.800" ry="2" fill="#d8eafa"/></svg>
        <span class="text-[5px] text-[#222] pr-[1px]">▼</span>
      </div>
    </div>
    <!-- canvas -->
    <div class="h-[541px] shrink-0 relative">
      <svg class="w-[779px] h-[541px] block" viewBox="501 139 779 541">
        <path d="M535 680V255.500H1280" fill="none" stroke="#86847e" stroke-width="1"/>
        <rect x="828" y="303" width="86" height="17" fill="#e9e7e2"/>
        <!-- wires -->
        <g fill="none" stroke="#5f5e5a" stroke-width=".8">
          <path d="M563 318.500C590 318 600 302 624 301"/>
          <path d="M563 318.500C605 318 620 340 640 347C645 349 655 350 664 351"/>
          <path d="M588 357C615 358 602 305 624 305"/>
          <path d="M657 303C675 303 665 325 655 335C650 342 655 342 664 343"/>
          <path d="M661 347H664"/>
          <path d="M699 346H708"/>
          <path d="M739 344H767"/>
          <path d="M750 368C765 368 752 348 767 347"/>
          <path d="M789 348C800 350 790 365 788 370C786 376 790 377 795 377"/>
          <path d="M789 347L855 351"/>
          <path d="M797 400.500H855"/>
          <path d="M849 377C855 378 855 385 853 392C853 395 854 396 855 396"/>
          <path d="M881 352H943"/>
          <path d="M921 361H943"/>
          <path d="M879 398H943"/>
          <path d="M874 316H888"/>
          <path d="M913 311C930 311 935 320 930 340C925 355 915 385 922 395C928 400 935 401 943 401"/>
          <path d="M913 313C930 313 935 325 932 345C932 352 935 354 943 355"/>
          <path d="M921 407H943"/>
          <path d="M970 357C985 357 985 385 1001 385"/>
          <path d="M970 402C985 402 990 389 1001 389"/>
          <path d="M1027 387H1120L1223 388"/>
          <path d="M1027 387C1045 387 1030 425 1049 428"/>
          <path d="M1081 429C1090 429 1082 445 1087 447"/>
          <path d="M1082 452C1095 452 1080 455 1087 455"/>
          <path d="M1097 395C1130 395 1150 382 1183 382"/>
          <path d="M1097 395C1130 395 1135 440 1150 460C1160 468 1170 468 1183 469"/>
          <path d="M1173 365H1183"/>
          <path d="M1174 451H1183"/>
          <path d="M1217 373C1225 376 1215 388 1223 392"/>
          <path d="M1217 459C1232 455 1212 430 1223 430"/>
          <path d="M1124 449C1160 449 1180 429 1223 429"/>
          <path d="M739 346L797 373C830 390 850 400 880 406C920 420 985 431 1049 431"/>
          <path d="M815 380C845 398 865 405 880 414C915 432 975 452 1039 453L1087 454"/>
        </g>
        <path d="M563 318.500C630 318 670 330 708 344" fill="none" stroke="#4d4c49" stroke-width="1.100"/>
        <path d="M739 346L797 373" fill="none" stroke="#4d4c49" stroke-width="1"/>

        <!-- red bubbles -->
        <circle cx="564.500" cy="358" r="24" fill="#ef5350"/>
        <circle cx="775.500" cy="400.500" r="24" fill="#ef5350"/>
        <!-- nodes -->
        <g fill="#8d8c9a" stroke="#5b5a60" stroke-width=".9">
          <rect x="540.500" y="315.500" width="22.500" height="6"/>
          <rect x="624.500" y="298" width="32" height="18"/>
          <rect x="664" y="340.500" width="35" height="14"/>
          <rect x="708" y="341.500" width="31" height="9.500"/>
          <rect x="767.500" y="341.500" width="21" height="14"/>
          <rect x="795.500" y="374.500" width="26.500" height="6.500"/>
          <rect x="826.500" y="374.500" width="23" height="6.500"/>
          <rect x="855" y="347.500" width="26" height="9.500"/>
          <rect x="855" y="393.500" width="24" height="10"/>
          <rect x="888" y="304.500" width="25" height="14.500"/>
          <rect x="943.500" y="349.500" width="27" height="14"/>
          <rect x="943.500" y="395.500" width="27" height="13.500"/>
          <rect x="1001.500" y="382.500" width="25.500" height="9.500"/>
          <rect x="1049.500" y="425.500" width="31.500" height="9.500"/>
          <rect x="1087.500" y="444.500" width="35.500" height="14"/>
          <rect x="1183" y="362.500" width="33.500" height="22"/>
          <rect x="1183" y="448.500" width="33.500" height="22"/>
        </g>
        <!-- sliders -->
        <g stroke="#5b5a60" stroke-width=".7">
          <rect x="543" y="355.500" width="43" height="4.500" fill="#d5d3d1"/><rect x="543" y="355.500" width="10" height="4.500" fill="#8d8c9a"/>
          <rect x="617" y="345" width="44" height="4" fill="#dad8d2"/><rect x="617" y="345" width="9" height="4" fill="#8d8c9a"/>
          <rect x="754" y="398" width="43" height="4.500" fill="#d5d3d1"/><rect x="754" y="398" width="10" height="4.500" fill="#8d8c9a"/>
          <rect x="829.500" y="313.500" width="44" height="4.500" fill="#d0cec8"/><rect x="829.500" y="313.500" width="18" height="4.500" fill="#8d8c9a"/>
          <rect x="1054.500" y="393.500" width="43" height="4.500" fill="#e6e4df"/><rect x="1054.500" y="393.500" width="18" height="4.500" fill="#8d8c9a"/>
          <rect x="1039" y="449.500" width="43" height="4.500" fill="#e6e4df"/><rect x="1039" y="449.500" width="9" height="4.500" fill="#8d8c9a"/>
          <rect x="1146.500" y="363" width="27" height="4" fill="#8d8c9a"/><rect x="1164.500" y="363" width="9" height="4" fill="#d938c8"/>
          <rect x="1147" y="449.500" width="27" height="4" fill="#8d8c9a"/><rect x="1165" y="449.500" width="9" height="4" fill="#2f4f85"/>
        </g>
        <!-- panels -->
        <g fill="#fdf55a" stroke="#8f8c3a" stroke-width=".8">
          <rect x="739" y="357.500" width="11" height="23"/>
          <rect x="906.500" y="356" width="15" height="10.500"/>
          <rect x="906.500" y="401.500" width="15" height="10.500"/>
        </g>
        <path d="M906.500 360.500h15" stroke="#6b6830" stroke-width="1"/>
        <g fill="#dcdad5" stroke="#77756f" stroke-width=".8">
          <rect x="1223.500" y="386" width="19" height="9"/>
          <rect x="1223.500" y="426.500" width="19" height="9"/>
        </g>
        <!-- mouse cursor -->
        <path d="M751.500 489v11l2.500-2.500 2 4 1.500-.8-2-3.800 3.500-.2z" fill="#f4f4f4" stroke="#222" stroke-width=".8"/>
        <!-- navigation wheel -->
        <circle cx="1262" cy="660.500" r="13" fill="#c2c2c2" stroke="#555"/>
        <circle cx="1262" cy="660.500" r="11.500" fill="none" stroke="#fff" stroke-width="1.200" stroke-dasharray="7 2.500"/>
        <path d="M1244 650l6-1-1-1.500c3-2 6-1.500 9-1" fill="none" stroke="#111" stroke-width="2"/>
      </svg>
      <div class="absolute left-0 bottom-0 w-[97px] h-[19px] bg-gradient-to-b from-[#9a9a9a] to-[#6f6f6f] rounded-tr-[2px] flex items-center pl-[2px] gap-[3px]">
        <span class="w-[15px] h-[16px] bg-[#bdbdbd] border border-[#555] flex items-center justify-center"><svg class="w-[11px] h-[12px]" viewBox="0 0 11 12"><path d="M5.500 0v6M3 4l2.500 3L8 4M1 10h9" fill="none" stroke="#111" stroke-width="1.600"/></svg></span>
        <span class="w-[15px] h-[16px] bg-[#e8b21f] border border-[#8a6a12] flex items-center justify-center"><svg class="w-[12px] h-[12px]" viewBox="0 0 12 12"><path d="M1 11L4 7M3 11L8 3M6 11l5-7" stroke="#7a3a10" stroke-width="1.500"/></svg></span>
        <svg class="w-[16px] h-[14px]" viewBox="0 0 16 14"><path d="M4 1v12M2 3l2-2 2 2M2 11l2 2 2-2" fill="none" stroke="#111" stroke-width="1.300"/><path d="M9 3l2.500 5L14 3M11.500 8l-2 5" fill="none" stroke="#111" stroke-width="1.200"/></svg>
        <svg class="w-[16px] h-[14px]" viewBox="0 0 16 14"><path d="M4 5c0-4 8-4 8 0" fill="none" stroke="#111" stroke-width="1.500"/><path d="M3 9h10l2 4H1z" fill="#d99a2c" stroke="#333" stroke-width=".5"/><path d="M2 4l2 2 2-2" fill="none" stroke="#111"/></svg>
        <svg class="w-[16px] h-[14px]" viewBox="0 0 16 14"><path d="M3 12l9-9" stroke="#e0a82c" stroke-width="2.500"/><circle cx="13" cy="2" r="1.500" fill="none" stroke="#222"/><circle cx="3" cy="12" r="1.500" fill="#fff" stroke="#222"/></svg>
      </div>
    </div>
    <div class="h-[16px] shrink-0 bg-[#f0f0f0] flex items-center pl-[2px] pr-[17px] text-[7.8px] text-[#333]">
      <svg class="w-[11px] h-[11px] mr-[3px]" viewBox="0 0 11 11"><circle cx="5.500" cy="5.500" r="5" fill="#2462b8"/><path d="M3.500 2.500v4a2 2 0 004 0v-4" fill="none" stroke="#fff"/></svg>
      <span>Autosave complete (35 seconds ago)</span>
      <span class="ml-auto text-[#9a9a9a]">1.0.0008</span>
    </div>
  </div>
</div>
</body>
</html>
